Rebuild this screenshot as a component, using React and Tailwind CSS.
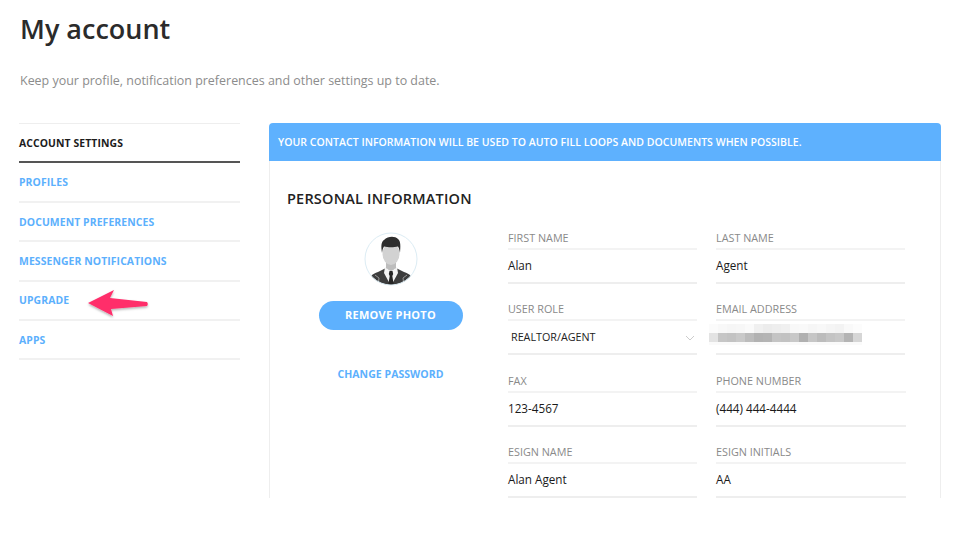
const font = { fontFamily: '"Open Sans", sans-serif' };

function Field({ label, value, children, wide }) {
  return (
    <div className={wide ? "w-[190px]" : "w-[189px]"}>
      <div className="h-[20px] text-[10.8px] leading-[20px] font-medium text-[#8a8a8a]">{label}</div>
      <div className="h-[36px] border-t-2 border-b-2 border-t-[#f3f3f3] border-b-[#eeeeee] flex items-center relative">
        {children || <span className="text-[11.7px] text-[#1a1a1a]">{value}</span>}
      </div>
    </div>
  );
}

function NavItem({ label, active }) {
  return (
    <div className={`h-[39.4px] pt-[2px] flex items-center border-b-2 text-[10.4px] font-bold tracking-[0.1px] ${active ? "border-b-[#555555] text-[#1c1c1c]" : "border-b-[#f1f1f1] text-[#5cb0fd]"}`}>
      {label}
    </div>
  );
}

function Avatar() {
  return (
    <svg width="54" height="54" viewBox="0 0 54 54">
      <defs><clipPath id="c"><circle cx="27" cy="27" r="26" /></clipPath></defs>
      <circle cx="27" cy="27" r="26" fill="#fff" />
      <g clipPath="url(#c)">
        <path d="M3 54c1-9 5-12 11-14l8-4 5 3 5-3 8 4c6 2 10 5 11 14z" fill="#3d3d3d" />
        <path d="M21 35l6 4 6-4 1 6-7 13-7-13z" fill="#f4f4f4" />
        <path d="M25.500 39h3l.7 3-.9 2 1.700 10h-6l1.700-10-.9-2z" fill="#262626" />
        <path d="M11 43l4 3-1 8M43 43l-4 3 1 8" stroke="#999" strokeWidth="1" fill="none" />
        <path d="M22 28h10v8l-5 3-5-3z" fill="#bdbdbd" />
        <ellipse cx="27" cy="22" rx="8.500" ry="11" fill="#d2d2d2" />
        <path d="M18 21c-1-7-1-11 2-13 4-4 11-4 14-1 3 2 2.500 8 2 14-.5-3-1-5-2-6.500-4 1-10 1-14 0-1 1.500-1.500 3-2 6.500z" fill="#2e2e2e" />
      </g>
      <circle cx="27" cy="27" r="26" fill="none" stroke="#dcecf4" strokeWidth="1" />
    </svg>
  );
}

function BlurredEmail() {
  const top = ["#fbfbfb","#f8f8f8","#f6f6f6","#f7f7f7","#fafafa","#f0f0f0","#ececec","#eeeeee","#f0f0f0","#f8f8f8","#f9f9f9","#f6f6f6","#f8f8f8","#f5f5f5","#f3f3f3","#f9f9f9","#fcfcfc"];
  const mid = ["#e3e3e3","#c6c6c6","#c3c3c3","#c9c9c9","#bcbcbc","#b2b2b2","#b4b4b4","#c4c4c4","#c2c2c2","#c8c8c8","#b0b0b0","#c6c6c6","#bcbcbc","#c4c4c4","#c8c8c8","#b4b4b4","#d6d6d6"];
  return (
    <svg width="153" height="21" viewBox="0 0 153 21" className="absolute left-[-7px] top-[3px]">
      {top.map((c, i) => <rect key={"t" + i} x={i * 9} y="0" width="9" height="9" fill={c} />)}
      {mid.map((c, i) => <rect key={"m" + i} x={i * 9} y="9" width="9" height="9" fill={c} />)}
      {top.map((c, i) => <rect key={"b" + i} x={i * 9} y="18" width="9" height="3" fill="#fafafa" />)}
    </svg>
  );
}

export default function App() {
  return (
    <div style={font} className="w-[960px] h-[540px] bg-white overflow-hidden relative">
      <div className="pl-[20px] pt-[9px]">
        <h1 className="text-[27px] leading-[40px] font-semibold text-[#2b2b2b]">My account</h1>
        <p className="mt-[22px] text-[12.46px] leading-[20px] text-[#8c8c8c]">Keep your profile, notification preferences and other settings up to date.</p>
      </div>
      <div className="flex pl-[19px] pt-[32px] gap-[29px]">
        <div className="w-[221px] border-t border-t-[#eeeeee] h-fit">
          <NavItem label="ACCOUNT SETTINGS" active />
          <NavItem label="PROFILES" />
          <NavItem label="DOCUMENT PREFERENCES" />
          <NavItem label="MESSENGER NOTIFICATIONS" />
          <NavItem label="UPGRADE" />
          <NavItem label="APPS" />
        </div>
        <div className="w-[672px] h-[375px] overflow-hidden">
          <div className="h-[38px] pt-[2px] rounded-t-[4px] bg-[#5eb1fe] flex items-center pl-[9px] text-[10.5px] font-semibold tracking-[0.03px] text-white">
            YOUR CONTACT INFORMATION WILL BE USED TO AUTO FILL LOOPS AND DOCUMENTS WHEN POSSIBLE.
          </div>
          <div className="h-[337px] border-x border-x-[#eeeeee] pl-[17px]">
            <h2 className="pt-[28px] text-[14.5px] leading-[20px] font-semibold tracking-[0.2px] text-[#222222]">PERSONAL INFORMATION</h2>
            <div className="flex mt-[19px]">
              <div className="w-[221px] flex flex-col items-center pt-[4px] pr-[14px]">
                <Avatar />
                <button style={font} className="mt-[15px] w-[144px] h-[29px] rounded-full bg-[#5eb1fe] text-white text-[11px] font-bold tracking-[0.25px]">REMOVE PHOTO</button>
                <div className="mt-[36px] text-[10.5px] leading-[16px] font-bold tracking-[0.05px] text-[#5cb0fd]">CHANGE PASSWORD</div>
              </div>
              <div className="grid grid-cols-[189px_190px] gap-x-[19px] gap-y-[15.4px]">
                <Field label="FIRST NAME" value="Alan" />
                <Field label="LAST NAME" value="Agent" />
                <Field label="USER ROLE">
                  <span className="pl-[3px] text-[10.75px] font-medium text-[#222222]">REALTOR/AGENT</span>
                  <svg width="10" height="6" viewBox="0 0 10 6" className="absolute right-[2px] top-[14px]"><path d="M1 1l4 4 4-4" fill="none" stroke="#cccccc" strokeWidth="1" /></svg>
                </Field>
                <Field label="EMAIL ADDRESS"><BlurredEmail /></Field>
                <Field label="FAX" value="123-4567" />
                <Field label="PHONE NUMBER" value="(444) 444-4444" wide />
                <Field label="ESIGN NAME" value="Alan Agent" />
                <Field label="ESIGN INITIALS" value="AA" wide />
              </div>
            </div>
          </div>
        </div>
      </div>
      <svg width="70" height="36" viewBox="0 0 70 36" className="absolute left-[85px] top-[286px]">
        <defs><filter id="s" x="-20%" y="-20%" width="140%" height="140%"><feDropShadow dx="0" dy="1.500" stdDeviation="1.200" floodColor="#000" floodOpacity="0.3" /></filter></defs>
        <path d="M3 17L29 4l-4 8 37 4c1 1 1 3 0 4L26 23l2 7z" fill="#ff2d6b" filter="url(#s)" />
      </svg>
    </div>
  );
}
